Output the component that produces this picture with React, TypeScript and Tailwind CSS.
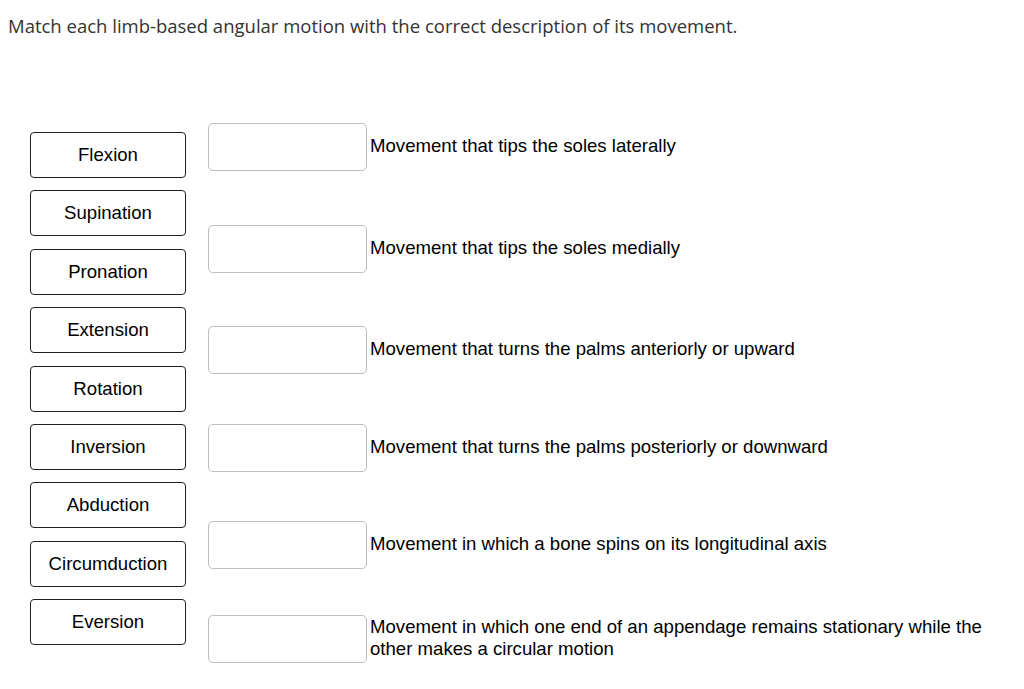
import React from "react";

const TERMS = [
  "Flexion",
  "Supination",
  "Pronation",
  "Extension",
  "Rotation",
  "Inversion",
  "Abduction",
  "Circumduction",
  "Eversion",
];

// top margins reproduce the uneven spacing of the drop targets
const TARGETS = [
  { text: "Movement that tips the soles laterally", mt: "mt-0" },
  { text: "Movement that tips the soles medially", mt: "mt-[54px]" },
  { text: "Movement that turns the palms anteriorly or upward", mt: "mt-[53px]" },
  { text: "Movement that turns the palms posteriorly or downward", mt: "mt-[50px]" },
  { text: "Movement in which a bone spins on its longitudinal axis", mt: "mt-[49px]" },
  {
    text: "Movement in which one end of an appendage remains stationary while the other makes a circular motion",
    mt: "mt-[46px]",
  },
];

export default function App() {
  return (
    <div className="w-[1024px] h-[689px] bg-white overflow-hidden">
      <p className="pl-2 pt-[14px] text-[18.5px] leading-[24px] text-[#333] font-['Open_Sans',sans-serif]">
        Match each limb-based angular motion with the correct description of its movement.
      </p>

      <div className="flex items-start pl-[30px] font-['Liberation_Sans',Arial,sans-serif] text-[18.6px] text-black">
        {/* draggable terms */}
        <div className="mt-[94px] w-[156px] flex flex-col gap-[12.4px]">
          {TERMS.map((t) => (
            <div
              key={t}
              className="h-[46px] rounded-[4px] border border-[#222] flex items-center justify-center"
            >
              {t}
            </div>
          ))}
        </div>

        {/* drop targets */}
        <div className="ml-[22px] mt-[85px] flex flex-col">
          {TARGETS.map((r) => (
            <div key={r.text} className={`flex items-center ${r.mt}`}>
              <div className="w-[159px] h-[48px] shrink-0 rounded-[5px] border border-[#bdbdbd]" />
              <p className="ml-[3px] w-[635px] pb-[2px] leading-[22px]">{r.text}</p>
            </div>
          ))}
        </div>
      </div>
    </div>
  );
}
